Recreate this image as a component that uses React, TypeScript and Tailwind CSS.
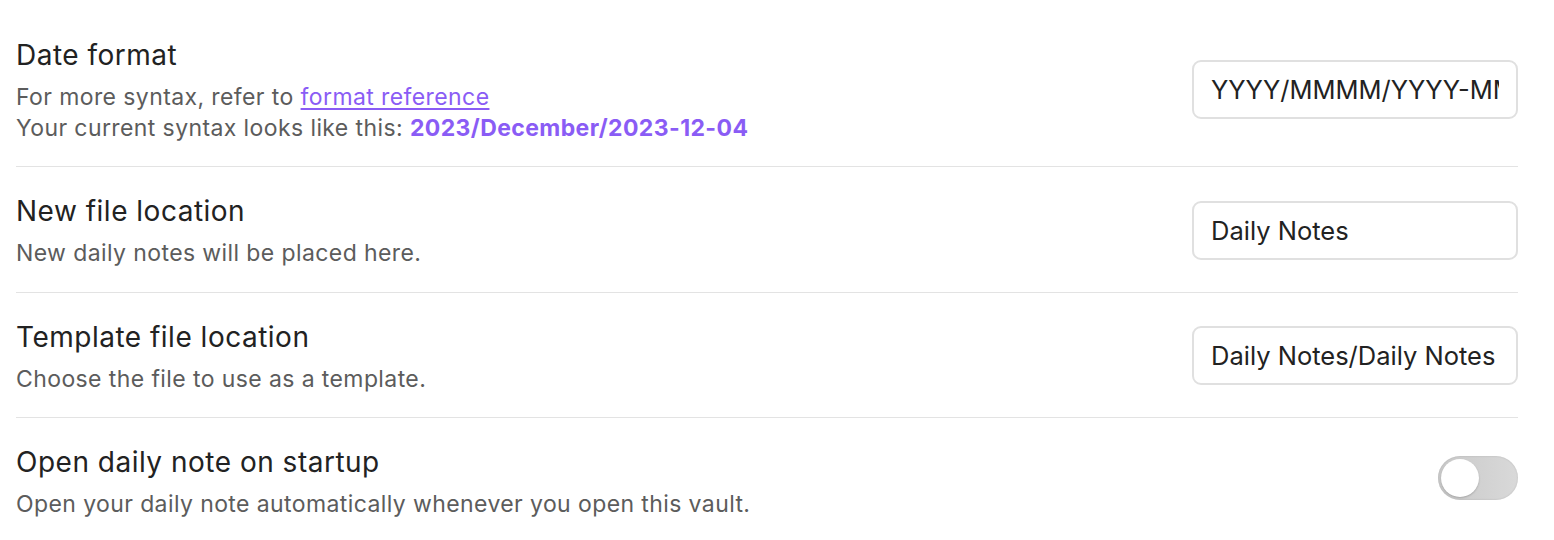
import { useState } from "react";

const font = { fontFamily: "Inter, 'Noto Sans', sans-serif" };

function Row({
  title,
  children,
  control,
  last,
}: {
  title: string;
  children: React.ReactNode;
  control: React.ReactNode;
  last?: boolean;
}) {
  return (
    <div className={`flex items-center justify-between gap-8 pt-[24px] pb-[22.5px] ${last ? "" : "border-b border-[#e3e3e3]"}`}>
      <div className="min-w-0">
        <div className="text-[28px] leading-[40px] tracking-[0.5px] text-[#222222]">{title}</div>
        <div className="mt-[7px] text-[23px] leading-[31px] tracking-[0.4px] text-[#5c5c5c]">{children}</div>
      </div>
      <div className="shrink-0">{control}</div>
    </div>
  );
}

function TextInput({ value }: { value: string }) {
  return (
    <input
      readOnly
      value={value}
      className="w-[326px] h-[59px] rounded-[9px] border-2 border-[#e0e0e0] bg-white px-[17px] text-[25.5px] text-[#222222] outline-none"
      style={font}
    />
  );
}

function Toggle() {
  const [on, setOn] = useState(false);
  return (
    <button
      onClick={() => setOn(!on)}
      className={`relative w-[80px] h-[44px] rounded-full transition-colors shadow-[inset_0_0_2px_rgba(0,0,0,0.15)] ${on ? "bg-[#8a5cf5]" : "bg-gradient-to-r from-[#c9c9c9] to-[#d9d9d9]"}`}
    >
      <span
        className={`absolute top-[3px] w-[38px] h-[38px] rounded-full bg-white shadow-[0_1px_2px_rgba(0,0,0,0.2)] transition-all ${on ? "left-[39px]" : "left-[3px]"}`}
      />
    </button>
  );
}

export default function App() {
  return (
    <div className="w-[1554px] h-[540px] bg-white pl-4 pr-[36px] pt-[10.5px] overflow-hidden" style={font}>
      <Row title="Date format" control={<TextInput value="YYYY/MMMM/YYYY-MM-DD" />}>
        <div>
          For more syntax, refer to{" "}
          <a href="#" className="text-[#8a5cf5] underline underline-offset-[3px] decoration-[1.5px]">
            format reference
          </a>
        </div>
        <div>
          Your current syntax looks like this:{" "}
          <span className="font-bold text-[#8a5cf5]">2023/December/2023-12-04</span>
        </div>
      </Row>
      <Row title="New file location" control={<TextInput value="Daily Notes" />}>
        New daily notes will be placed here.
      </Row>
      <Row title="Template file location" control={<TextInput value="Daily Notes/Daily Notes" />}>
        Choose the file to use as a template.
      </Row>
      <Row title="Open daily note on startup" control={<Toggle />} last>
        Open your daily note automatically whenever you open this vault.
      </Row>
    </div>
  );
}
